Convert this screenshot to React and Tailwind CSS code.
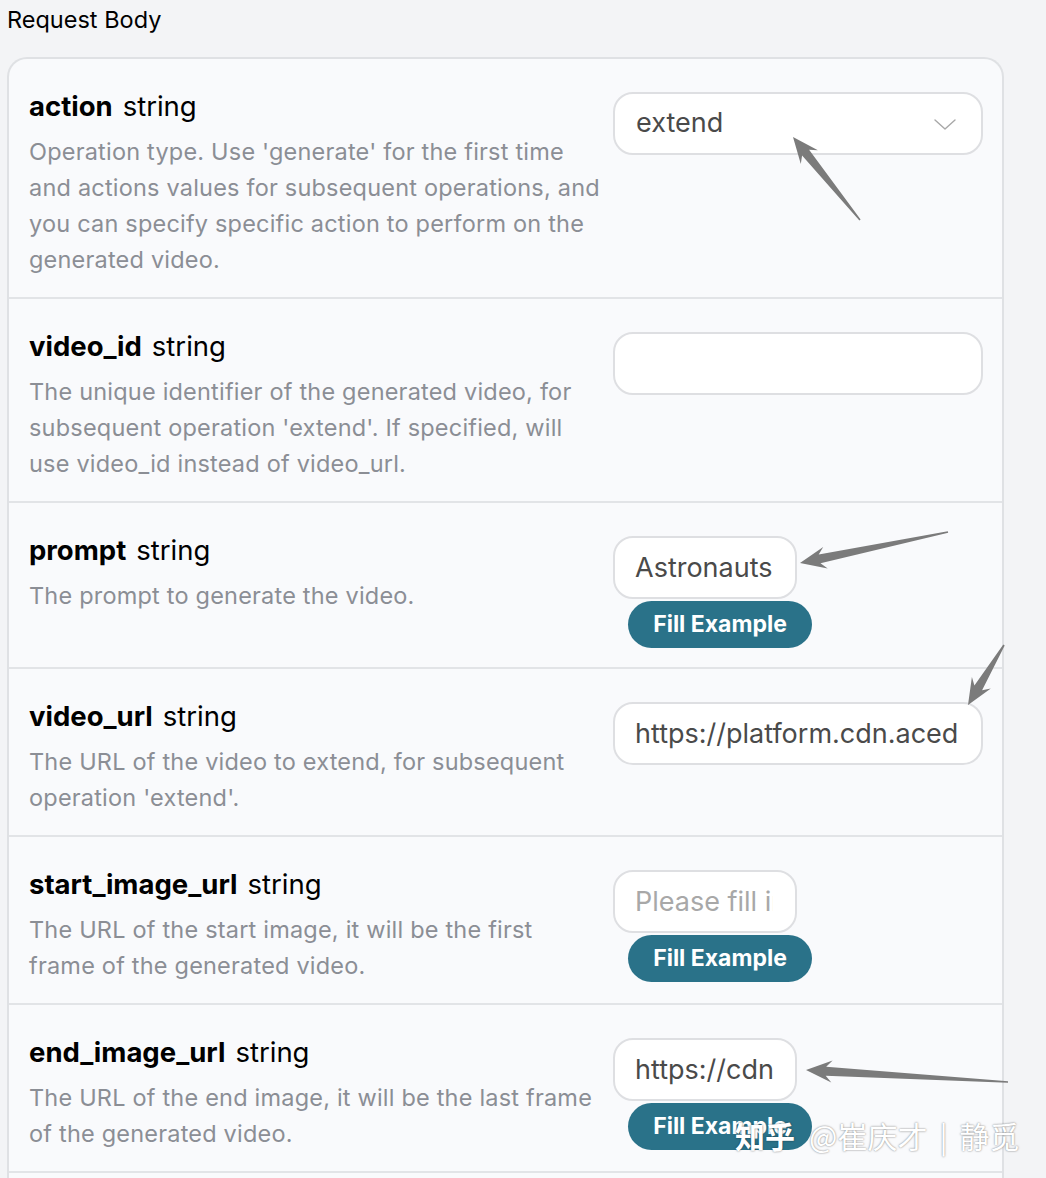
import React from 'react';

const fields = [
  {
    name: 'action',
    desc: "Operation type. Use 'generate' for the first time and actions values for subsequent operations, and you can specify specific action to perform on the generated video.",
    kind: 'select',
    value: 'extend',
  },
  {
    name: 'video_id',
    desc: "The unique identifier of the generated video, for subsequent operation 'extend'. If specified, will use video_id instead of video_url.",
    kind: 'wide',
    value: '',
  },
  {
    name: 'prompt',
    desc: 'The prompt to generate the video.',
    kind: 'example',
    value: 'Astronauts',
  },
  {
    name: 'video_url',
    desc: "The URL of the video to extend, for subsequent operation 'extend'.",
    kind: 'wide',
    value: 'https://platform.cdn.acedata.cloud/luma/video.mp4',
  },
  {
    name: 'start_image_url',
    desc: 'The URL of the start image, it will be the first frame of the generated video.',
    kind: 'example',
    value: '',
    placeholder: 'Please fill in',
  },
  {
    name: 'end_image_url',
    desc: 'The URL of the end image, it will be the last frame of the generated video.',
    kind: 'example',
    value: 'https://cdn.acedata.cloud/image.png',
  },
];

// annotation arrows drawn over the screenshot: [tailX, tailY, tipX, tipY]
const arrows = [
  [860, 220, 793, 137],
  [948, 532, 800, 563],
  [1004, 645, 968, 705],
  [1008, 1082, 806, 1070],
];

const arrowPoints = ([x1, y1, x2, y2]) => {
  const dx = x2 - x1;
  const dy = y2 - y1;
  const len = Math.sqrt(dx * dx + dy * dy);
  const ux = dx / len;
  const uy = dy / len;
  const nx = -uy;
  const ny = ux;
  const headLen = 26;
  const headW = 11;
  const bx = x2 - ux * headLen;
  const by = y2 - uy * headLen;
  const nb = 4.5;
  const pts = [
    [x1 + nx * 0.8, y1 + ny * 0.8],
    [bx + nx * nb + ux * 6, by + ny * nb + uy * 6],
    [bx + nx * headW, by + ny * headW],
    [x2, y2],
    [bx - nx * headW, by - ny * headW],
    [bx - nx * nb + ux * 6, by - ny * nb + uy * 6],
    [x1 - nx * 0.8, y1 - ny * 0.8],
  ];
  return pts.map(p => p.map(v => v.toFixed(1)).join(',')).join(' ');
};

const Chevron = () => (
  <svg width="24" height="12" viewBox="0 0 24 12" fill="none">
    <path d="M2 2l10 9L22 2" stroke="#a8a8a8" strokeWidth="1.4" strokeLinecap="round" strokeLinejoin="round" />
  </svg>
);

const FieldInput = ({ field }) => {
  if (field.kind === 'select') {
    return (
      <div className="flex items-center justify-between h-[63px] w-[370px] rounded-[20px] border-2 border-[#dedfe2] bg-white pl-[21px] pr-[24px]">
        <span className="text-[27px] text-[#4a4a4a]">{field.value}</span>
        <Chevron />
      </div>
    );
  }
  const narrow = field.kind === 'example';
  return (
    <div className="flex flex-col items-start">
      <input
        readOnly
        value={field.value}
        placeholder={field.placeholder || ''}
        className={`${narrow ? 'w-[184px]' : 'w-[370px]'} h-[63px] rounded-[20px] border-2 border-[#dedfe2] bg-white pl-[20px] pr-[22px] text-[27px] text-[#4a4a4a] placeholder:text-[#a8a8a8] outline-none`}
      />
      {narrow && (
        <button className="mt-[2px] ml-[15px] h-[47px] w-[184px] rounded-full bg-[#2a7289] text-[23px] font-bold text-white">
          Fill Example
        </button>
      )}
    </div>
  );
};

const App = () => {
  return (
    <div className="relative h-[1178px] overflow-hidden bg-[#f3f4f6] font-['Inter',sans-serif]">
      <div className="pl-[7px] text-[23.5px] leading-[40px] text-black">Request Body</div>
      <div className="mt-[17px] ml-[7px] w-[997px] rounded-t-[20px] border-2 border-b-0 border-[#dfe1e4] bg-[#f9fafc]">
        {fields.map(field => (
          <div key={field.name} className="flex border-b-2 border-[#e2e4e7] pl-[20px] pr-[19px] pt-[29px] pb-[19px]">
            <div className="flex-1 pr-[10px]">
              <div className="flex items-baseline leading-[36px]">
                <span className="text-[27.5px] font-bold text-black">{field.name}</span>
                <span className="ml-[10px] text-[27.5px] text-black">string</span>
              </div>
              <p className="mt-[10px] text-[23.5px] leading-[36px] tracking-[0.2px] text-[#8b8e95]">{field.desc}</p>
            </div>
            <div className="w-[370px] pt-[4px]">
              <FieldInput field={field} />
            </div>
          </div>
        ))}
        <div className="h-[80px]" />
      </div>

      <svg className="pointer-events-none absolute left-0 top-0" width="1046" height="1178">
        {arrows.map((a, i) => (
          <polygon key={i} points={arrowPoints(a)} fill="#7b7b7b" />
        ))}
      </svg>

      <div className="pointer-events-none absolute left-[735px] top-[1113px] flex items-center text-[30px] text-white [text-shadow:0_0_2px_rgba(0,0,0,0.55)] font-['Noto_Sans_CJK_SC',sans-serif]">
        <span className="font-bold">知乎</span>
        <span className="ml-[14px]">@崔庆才</span>
        <span className="mx-[12px]">|</span>
        <span>静觅</span>
      </div>
    </div>
  );
};

export default App;
